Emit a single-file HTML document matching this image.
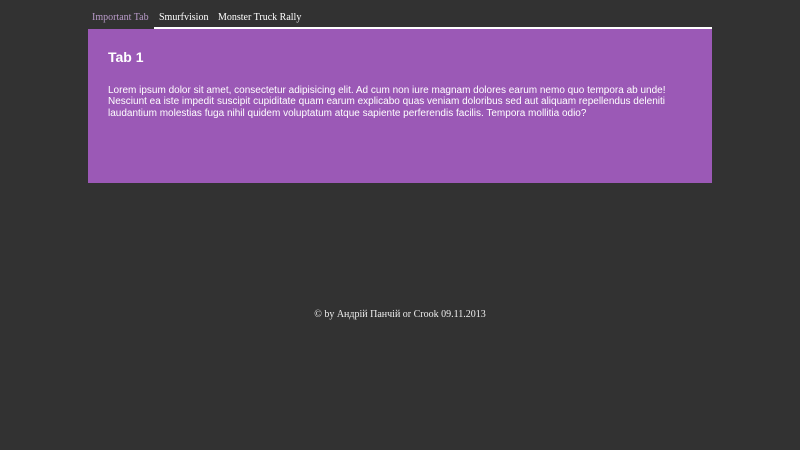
<!DOCTYPE html>
<html><head><style>
body{margin:0;background:#323232;width:800px;height:450px;overflow:hidden;font-family:"Liberation Serif",serif;}
.tab{position:absolute;top:12px;font-size:10px;line-height:12px;color:#fff;white-space:nowrap}
.line{position:absolute;left:154px;top:27px;width:558px;height:2px;background:#fff}
.box{position:absolute;left:88px;top:29px;width:624px;height:154px;background:#9b59b6;color:#fff;font-family:"Liberation Sans",sans-serif}
h1{position:absolute;left:20px;top:20px;margin:0;font-size:14px;font-weight:bold}
p{position:absolute;left:20px;top:56px;width:585px;margin:0;font-size:10px;line-height:11.3px}
.foot{position:absolute;top:309px;width:800px;text-align:center;color:#eee;font-size:10px}
</style></head><body>
<div class="box"><h1>Tab 1</h1><p>Lorem ipsum dolor sit amet, consectetur adipisicing elit. Ad cum non iure magnam dolores earum nemo quo tempora ab unde! Nesciunt ea iste impedit suscipit cupiditate quam earum explicabo quas veniam doloribus sed aut aliquam repellendus deleniti laudantium molestias fuga nihil quidem voluptatum atque sapiente perferendis facilis. Tempora mollitia odio?</p></div>
<div class="line"></div>
<div class="tab" style="left:92px;color:#b89ac8">Important Tab</div>
<div class="tab" style="left:159px">Smurfvision</div>
<div class="tab" style="left:218px">Monster Truck Rally</div>
<div class="foot">© by Андрій Панчій or Crook 09.11.2013</div>
</body></html>
